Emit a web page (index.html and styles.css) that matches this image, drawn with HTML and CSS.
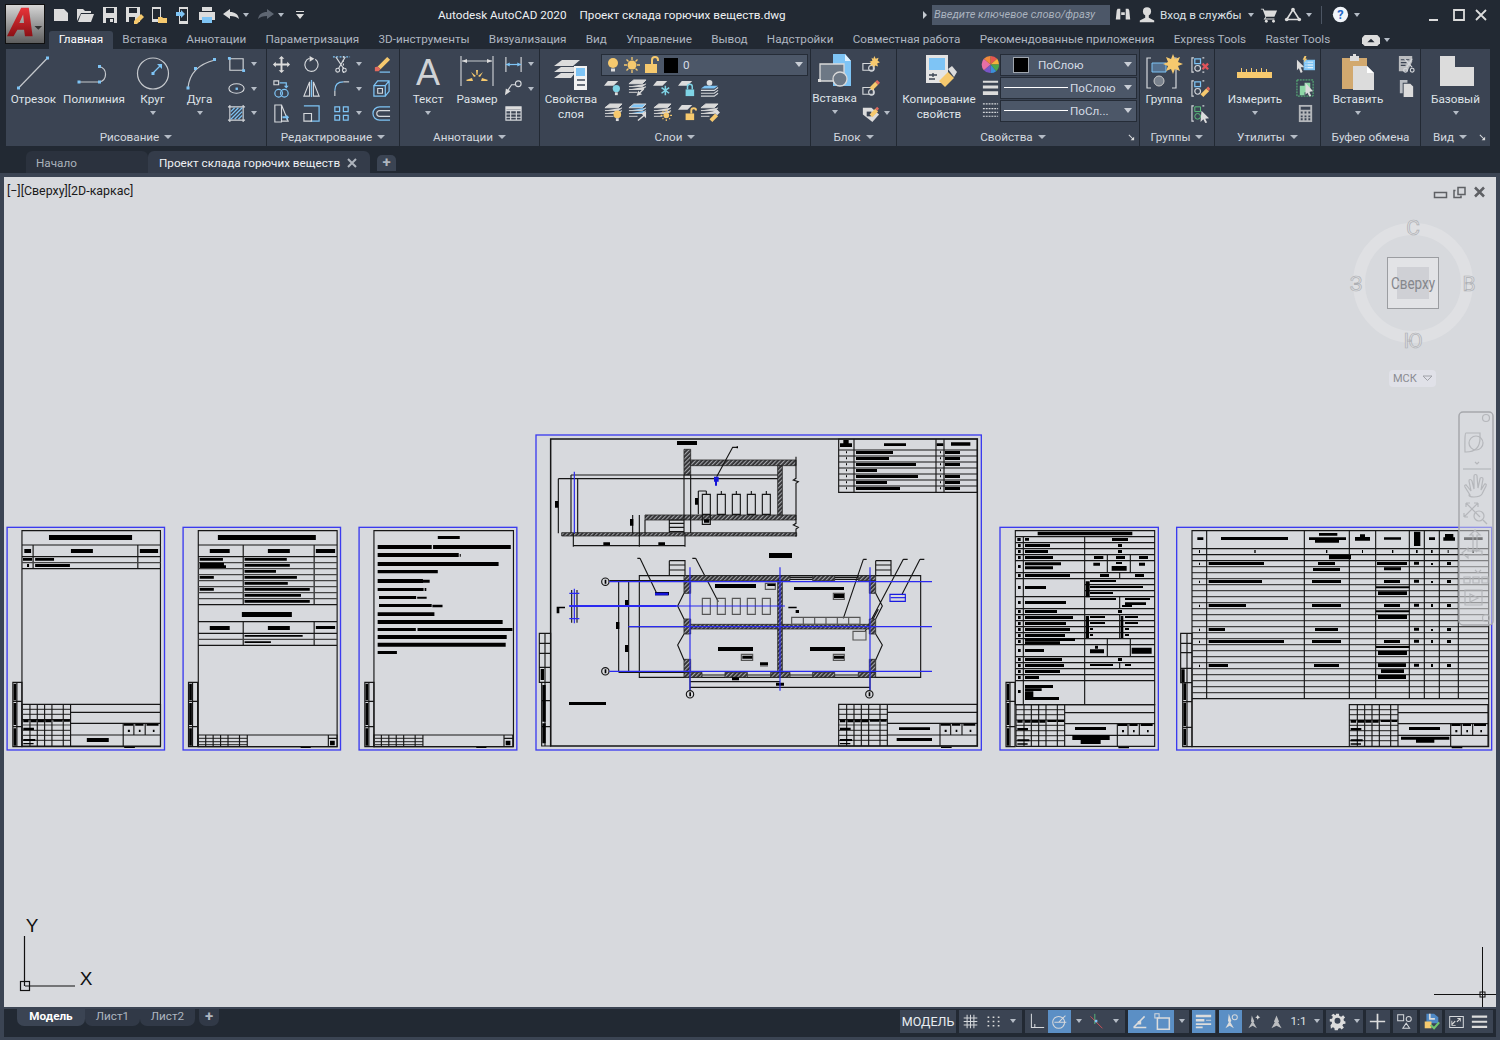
FILE: index.html
```html
<!DOCTYPE html>
<html lang="ru">
<head>
<meta charset="utf-8">
<title>Autodesk AutoCAD 2020</title>
<link rel="stylesheet" href="styles.css">
</head>
<body>
<div class="app">
  <div class="appbtn">
    <svg viewBox="0 0 40 40" width="38" height="38"><defs><linearGradient id="ar" x1="0" y1="0" x2="0" y2="1"><stop offset="0" stop-color="#e8343a"/><stop offset="1" stop-color="#8c1015"/></linearGradient></defs><path fill="url(#ar)" d="M1 33 16 3h8l4 30h-8l-1-7h-7l-4 7zM14 19h5l-1-9z"/><path fill="#333" d="M30 22h8l-4 4z"/></svg>
  </div>
  <header class="titlebar">
    <div class="qat">
      <span class="q"><svg viewBox="0 0 20 20"><path class="fw" d="M3 4h10l4 4v8H3z"/></svg></span>
      <span class="q"><svg viewBox="0 0 20 20"><path class="fw" d="M2 16V4h6l2 2h6v2H6z"/><path class="fw" d="M3 17l3-8h13l-3 8z"/></svg></span>
      <span class="q"><svg viewBox="0 0 20 20"><path class="fw" d="M3 2h14v16H3z"/><path fill="#222933" d="M6 3h8v5H6zM6 13h8v5H6z"/><path class="fw" d="M10 14h3v3h-3z"/></svg></span>
      <span class="q"><svg viewBox="0 0 20 20"><path class="fw" d="M2 2h14v15H2z"/><path fill="#222933" d="M5 3h8v5H5zM5 12h6v5H5z"/><path class="fy" d="M10 16l7-7 3 3-7 7h-3z"/></svg></span>
      <span class="q"><svg viewBox="0 0 20 20"><path class="fw" d="M4 2h9v15H4z"/><path fill="#222933" d="M5 4h7v10H5z"/><path class="fy" d="M10 12h4l1 1h4v5h-9z"/></svg></span>
      <span class="q"><svg viewBox="0 0 20 20"><path class="fw" d="M6 2h9v17H6z"/><path fill="#222933" d="M7 4h7v12H7z"/><path class="fb" d="M3 7h5V5l4 4-4 4v-2H3z"/></svg></span>
      <span class="q"><svg viewBox="0 0 20 20"><path class="fw" d="M5 2h10v4H5zM2 7h16v8h-3v-3H5v3H2z"/><path class="fb" d="M5 12h10v6H5z"/></svg></span>
      <span class="q"><svg viewBox="0 0 20 20"><path class="fw" d="M2 9l7-5v3c5 0 8 2 9 7-2-2-5-3-9-3v3z"/></svg></span><i class="car cq"></i>
      <span class="q ml4"><svg viewBox="0 0 20 20"><path fill="#5e6672" d="M18 9l-7-5v3C6 7 3 9 2 14c2-2 5-3 9-3v3z"/></svg></span><i class="car cq"></i>
      <span class="more"><svg viewBox="0 0 10 10" width="10" height="10"><path class="fw" d="M1 1h8v1H1zM1 4h8L5 9z"/></svg></span>
    </div>
    <div class="doctitle"><span>Autodesk AutoCAD 2020</span><span>Проект склада горючих веществ.dwg</span></div>
    <i class="arrow"></i>
    <div class="search">Введите ключевое слово/фразу</div>
    <span class="c26"><svg viewBox="0 0 20 20" width="18" height="18"><path class="fw" d="M3 5l1-2h3v12H2zM13 3h3l1 2 1 10h-5zM8 7h4v3H8z"/></svg></span>
    <span class="c22"><svg viewBox="0 0 20 20" width="18" height="18"><circle class="fw" cx="10" cy="6" r="4.5"/><path class="fw" d="M8 10h4v3l6 3v2H2v-2l6-3z"/></svg></span>
    <span class="svc">Вход в службы<i class="car"></i></span>
    <span class="c22 ml8"><svg viewBox="0 0 20 20" width="18" height="18"><path class="fw" d="M1 3h3l1 2h14l-3 7H7l-1 2h10v1H4l2-3L3 4H1z"/><circle class="fw" cx="7" cy="17" r="1.6"/><circle class="fw" cx="15" cy="17" r="1.6"/></svg></span>
    <span class="c22 ml2"><svg viewBox="0 0 20 20" width="18" height="18"><path class="sw2" d="M10 4l7 11H3z"/><circle class="fw" cx="10" cy="4" r="2"/><circle class="fw" cx="3" cy="15" r="2"/><circle class="fw" cx="17" cy="15" r="2"/></svg></span>
    <i class="car ml2"></i>
    <i class="divider"></i>
    <span class="c22 ml7"><svg viewBox="0 0 20 20" width="17" height="17"><circle fill="#f0f4fa" cx="10" cy="10" r="9"/><text x="10" y="15" class="qm">?</text></svg></span>
    <i class="car ml3"></i>
    <span class="c22 ml66"><svg viewBox="0 0 14 14" width="14" height="14"><path class="fw" d="M2 11h9v2H2z"/></svg></span>
    <span class="c22 ml3"><svg viewBox="0 0 14 14" width="14" height="14"><path class="sw2" d="M2 2h10v10H2z"/><path class="fw" d="M2 1h10v2H2z"/></svg></span>
    <span class="c22"><svg viewBox="0 0 14 14" width="14" height="14"><path class="sw2" d="M2 2l10 10M12 2 2 12"/></svg></span>
  </header>

  <nav class="tabs">
    <span class="t on">Главная</span><span class="t">Вставка</span><span class="t">Аннотации</span><span class="t">Параметризация</span><span class="t">3D-инструменты</span><span class="t">Визуализация</span><span class="t">Вид</span><span class="t">Управление</span><span class="t">Вывод</span><span class="t">Надстройки</span><span class="t">Совместная работа</span><span class="t">Рекомендованные приложения</span><span class="t">Express Tools</span><span class="t">Raster Tools</span>
    <span class="t tmini"><svg viewBox="0 0 20 12" width="18" height="11"><path class="fw" d="M3 0h14l3 3v6l-3 3H3L0 9V3z"/><path fill="#222933" d="M6 8l4-4 4 4z"/></svg><i class="car ml4"></i></span>
  </nav>

  <section class="ribbon">
    <div class="panel p1">
      <div class="pbody">
        <div class="big w55"><svg class="bi" viewBox="0 0 36 36"><path class="sg" d="M2.5 34 31.5 4"/><path class="fb" d="M1 32.500h3v3H1zM30 2.500h3v3h-3z"/></svg><span class="lb">Отрезок</span></div>
        <div class="big w66"><svg class="bi" viewBox="0 0 36 36"><path class="sg" d="M3 28H23.500A8 8 0 0 0 23.500 12.500"/><path class="fb" d="M1.500 26.500h3v3h-3zM22 26.500h3v3h-3zM22 11h3v3h-3z"/></svg><span class="lb">Полилиния</span></div>
        <div class="big w51"><svg class="bi" viewBox="0 0 36 36"><circle class="sg" cx="18" cy="19.500" r="15.500"/><path class="sb" d="M18 19 25 12"/><path class="fb" d="M16.500 18h3v3h-3zM22 10h5v5z"/></svg><span class="lb">Круг</span><i class="car cb"></i></div>
        <div class="big w43"><svg class="bi" viewBox="0 0 36 36"><path class="sg" d="M6 34Q8 12 33 6"/><path class="fb" d="M4.500 32.500h3v3h-3zM12 13h3v3h-3zM31 4h3v3h-3z"/></svg><span class="lb">Дуга</span><i class="car cb"></i></div>
        <div class="stack">
          <div class="cell"><span class="ic w30"><svg class="si" viewBox="0 0 20 20"><path class="sw" d="M3 4h14v12H3z"/><path class="fb" d="M1 2h3v3H1zM16 15h3v3h-3z"/></svg></span><i class="car"></i></div>
          <div class="cell"><span class="ic w30"><svg class="si" viewBox="0 0 20 20"><ellipse class="sw" cx="10" cy="10" rx="8" ry="5"/><path class="fb" d="M9 9h2.500v2.500H9z"/></svg></span><i class="car"></i></div>
          <div class="cell"><span class="ic w30"><svg class="si" viewBox="0 0 20 20"><path class="sw" d="M3 1v18M17 1v18M1 3h18M1 17h18"/><path class="sb" d="M4 8l4-4M4 12l8-8M4 16 16 4M8 16l8-8M12 16l4-4"/></svg></span><i class="car"></i></div>
        </div>
      </div>
      <div class="ptitle">Рисование<i class="car cl"></i></div>
    </div>

    <div class="panel p2">
      <div class="pbody">
        <div class="stack c4">
          <span class="ic"><svg class="si" viewBox="0 0 20 20"><path class="fw" d="M10 1l3 3h-2v5h5V7l3 3-3 3v-2h-5v5h2l-3 3-3-3h2v-5H4v2l-3-3 3-3v2h5V4H7z"/></svg></span>
          <span class="ic"><svg class="si" viewBox="0 0 20 20"><path class="sw" d="M14 4.500A7 7 0 1 1 8 3.500"/><path class="fw" d="M8 1l5 3-5 3z"/></svg></span>
          <div class="cell"><span class="ic w30"><svg class="si" viewBox="0 0 20 20"><path class="sb" stroke-dasharray="2 1.500" d="M1 2h18"/><path class="sw" d="M4 2l8 12M14 2 7 14"/><circle class="sw" cx="6" cy="16" r="2"/><circle class="sw" cx="13" cy="16" r="2"/><path class="sw" d="M12 1v18" stroke-dasharray="2 2"/></svg></span><i class="car"></i></div>
          <span class="ic"><svg class="si" viewBox="0 0 20 20"><path class="fy" d="M6 12 16 2l3 3-10 10z"/><path fill="#e36a5e" d="M3 13l3-1 3 3-2 2H3z"/><path class="sb" d="M8 18h11"/></svg></span>

          <span class="ic"><svg class="si" viewBox="0 0 20 20"><path class="sw" d="M2 2h5v4H2z"/><path class="sb" d="M8 4h7v4"/><path class="fb" d="M12.500 7h5L15 10z"/><circle class="sb" cx="7" cy="15" r="4"/><circle class="sb" cx="13" cy="15" r="4"/></svg></span>
          <span class="ic"><svg class="si" viewBox="0 0 20 20"><path class="sw" d="M8 3v15H2z"/><path class="sb" d="M10 1v18"/><path class="sw" d="M12 3v15h6z"/></svg></span>
          <div class="cell"><span class="ic w30"><svg class="si" viewBox="0 0 20 20"><path class="sw" d="M3 18v-6"/><path class="sb" d="M3 12Q3 3 12 3"/><path class="sw" d="M12 3h6"/></svg></span><i class="car"></i></div>
          <span class="ic"><svg class="si" viewBox="0 0 20 20"><path class="sb" d="M2 7h12v11H2zM2 7l4-5h12v11l-4 5M14 7l4-5"/><path class="sw" d="M6 10h5v5H6z"/></svg></span>

          <span class="ic"><svg class="si" viewBox="0 0 20 20"><path class="sw" d="M3 1h7v18H3zM10 1l7 17H10"/><path class="fb" d="M11 13h4v-2l3 3-3 3v-2h-4z"/></svg></span>
          <span class="ic"><svg class="si" viewBox="0 0 20 20"><path class="sb" d="M2 2h16v16H9"/><path class="sw" d="M2 10h8v8H2z"/></svg></span>
          <div class="cell"><span class="ic w30"><svg class="si" viewBox="0 0 20 20"><path class="sb" d="M3 3h5v5H3zM12 3h5v5h-5zM3 12h5v5H3zM12 12h5v5h-5z"/></svg></span><i class="car"></i></div>
          <span class="ic"><svg class="si" viewBox="0 0 20 20"><path class="sb" d="M19 3H8a7 7 0 0 0 0 14h11"/><path class="sw" d="M19 7H8a3 3 0 0 0 0 6h11"/></svg></span>
        </div>
      </div>
      <div class="ptitle">Редактирование<i class="car cl"></i></div>
    </div>

    <div class="panel p3">
      <div class="pbody">
        <div class="big w56"><span class="bigA">A</span><span class="lb">Текст</span><i class="car cb"></i></div>
        <div class="big w42"><svg class="bi" viewBox="0 0 36 36"><path class="sg" d="M2 2v30M34 2v30M3 7h30"/><path class="fw" d="M3 7l5-2v4zM33 7l-5-2v4z"/><path class="fy" d="M7 26l6-2 1 3h-6zM29 26l-6-2-1 3h6zM12 18l5 4-2 1zM24 18l-5 4 2 1zM17 16h2l-.500 5h-1z"/></svg><span class="lb">Размер</span></div>
        <div class="stack">
          <div class="cell"><span class="ic w30"><svg class="si" viewBox="0 0 20 20"><path class="sw" d="M2 2v16M18 2v16"/><path class="sb" d="M2 10h16"/><path class="fb" d="M2 10l4-2v4zM18 10l-4-2v4z"/></svg></span><i class="car"></i></div>
          <div class="cell"><span class="ic w30"><svg class="si" viewBox="0 0 20 20"><circle class="sw" cx="15" cy="5" r="3"/><path class="sw" d="M12 6H8l-4 6"/><path class="fw" d="M1 17l1-7 5 3z"/></svg></span><i class="car"></i></div>
          <div class="cell"><span class="ic w30"><svg class="si" viewBox="0 0 20 20"><path class="sw" d="M2 3h16v14H2zM2 7h16M2 10.500h16M2 14h16M7 7v10M13 7v10"/><path class="fw" d="M2 3h16v3H2z"/></svg></span></div>
        </div>
      </div>
      <div class="ptitle">Аннотации<i class="car cl"></i></div>
    </div>

    <div class="panel p4">
      <div class="pbody">
        <div class="big w62"><svg class="bi" viewBox="0 0 36 36"><path class="fw" d="M9 6h18l-7 6H1zM8 13h19l-7 5H1zM8 19h14l-4 5H1z"/><path fill="#f2f2f2" d="M21 12h13v24H21z"/><path class="fb" d="M23 14h9v8h-9z"/><path class="sk" d="M24 26h8M24 31h8"/></svg><span class="lb l2">Свойства<br>слоя</span></div>
        <div class="lcol">
          <div class="dd w207"><svg class="ddi" viewBox="0 0 75 20" width="75" height="20"><circle class="fy" cx="9" cy="8" r="5"/><path class="fw" d="M7 13.500h4v3h-4z"/><circle class="fy" cx="28" cy="10" r="4.500"/><path class="sy" d="M28 2v3M28 15v3M20 10h3M33 10h3M22.500 4.500l2 2M31.500 13.500l2 2M33.500 4.500l-2 2M24.500 13.500l-2 2"/><path class="fy" d="M41 9h12v9H41z"/><path class="sy2" d="M48 9V5a3 3 0 0 1 6 0v1"/><path fill="#000" d="M60 3h14v15H60z"/></svg><span class="ddt">0</span><i class="car cdd"></i></div>
          <div class="layers">
            <span class="ic"><svg class="si" viewBox="0 0 20 20"><path class="fw" d="M4 2h11l-5 5H0z"/><circle fill="#7fd4e6" cx="13" cy="10" r="3.800"/><path class="fw" d="M11.500 14h3v3h-3z"/></svg></span>
            <span class="ic"><svg class="si" viewBox="0 0 20 20"><use href="#stk"/><path class="fw" d="M17 11l-4 4 2 1-6 2 2-6 1 2 4-4z"/></svg></span>
            <span class="ic"><svg class="si" viewBox="0 0 20 20"><path class="fw" d="M4 2h11l-5 5H0z"/><path class="scy" d="M13 7v10M9 9l8 6M17 9l-8 6"/></svg></span>
            <span class="ic"><svg class="si" viewBox="0 0 20 20"><path class="fw" d="M4 2h11l-5 5H0z"/><path fill="#7fd4e6" d="M8 11h9v7H8z"/><path class="scy" d="M10 11V8a2.500 2.500 0 0 1 5 0v3"/></svg></span>
            <span class="ic"><svg class="si" viewBox="0 0 20 20"><circle class="fw" cx="10" cy="4" r="3"/><path class="fb" d="M5 7h14l-4 3H1z"/><path class="sw" d="M1 12h14l4-3M1 15h14l4-3M1 18h14l4-3"/></svg></span>
            <span class="ic"><svg class="si" viewBox="0 0 20 20"><use href="#stk"/><circle class="fy" cx="14" cy="12" r="4"/><path class="fw" d="M12.500 16h3v3h-3z"/></svg></span>
            <span class="ic"><svg class="si" viewBox="0 0 20 20"><use href="#stkb"/><path class="fw" d="M19 9v7l-2-2-6 5-1-1 6-5-2-2z"/></svg></span>
            <span class="ic"><svg class="si" viewBox="0 0 20 20"><use href="#stk"/><circle class="fy" cx="14" cy="13" r="3"/><path class="sy" d="M14 7v2M14 17v2M8 13h2M18 13h2M10 9l1 1M17 16l1 1M18 9l-1 1M11 16l-1 1"/></svg></span>
            <span class="ic"><svg class="si" viewBox="0 0 20 20"><path class="fw" d="M4 2h11l-5 5H0z"/><path class="fy" d="M8 11h9v7H8z"/><path class="sy2" d="M14 11V8a2.500 2.500 0 0 1 5 0"/></svg></span>
            <span class="ic"><svg class="si" viewBox="0 0 20 20"><use href="#stk"/><path class="fy" d="M10 17l6-6 3 3-6 6z"/><path class="fw" d="M14 9l3-3 4 4-3 3z"/></svg></span>
          </div>
        </div>
      </div>
      <div class="ptitle">Слои<i class="car cl"></i></div>
    </div>

    <div class="panel p5">
      <div class="pbody">
        <div class="big w47"><svg class="bi" viewBox="0 0 36 36"><path class="fb" d="M16 0h12l6 7v25H16z"/><path fill="#dff0fc" d="M28 0l6 7h-6z"/><path fill="#6d7885" stroke="#d9d9d9" stroke-width="1.300" d="M3 10h24v17H3z"/><circle fill="#6d7885" stroke="#d9d9d9" stroke-width="1.300" cx="23" cy="25" r="7"/><path class="fw" d="M1 25h3v3H1z"/></svg><span class="lb lbup">Вставка</span><i class="car cbu"></i></div>
        <div class="stack">
          <div class="cell"><span class="ic w24"><svg class="si" viewBox="0 0 20 20"><path class="sw" d="M2 9h11v7H2z"/><circle class="sw" cx="11" cy="14" r="3"/><path class="fy" d="M14 1l1.500 3 3-1-1 3 2.500 1.500-3 1.500 1 3-3-1-1.500 2.500-1-3-3 1 1-3L9 7l3-1-1-3 2 1z"/></svg></span></div>
          <div class="cell"><span class="ic w24"><svg class="si" viewBox="0 0 20 20"><path class="sw" d="M2 9h11v7H2z"/><circle class="sw" cx="11" cy="14" r="3"/><path class="fy" d="M9 9l6-6 3 3-6 6z"/><path fill="#e36a5e" d="M15 3l2-2 3 3-2 2z"/></svg></span></div>
          <div class="cell"><span class="ic w24"><svg class="si" viewBox="0 0 20 20"><path class="fw" d="M2 4h9l8 7-7 8-10-8z"/><path fill="#3b4453" d="M6 8h5v5H6z"/><path class="fy" d="M9 11l6-6 3 3-6 6z"/><path fill="#e36a5e" d="M15 5l2-2 2 2-2 2z"/></svg></span><i class="car ml2"></i></div>
        </div>
      </div>
      <div class="ptitle">Блок<i class="car cl"></i></div>
    </div>

    <div class="panel p6">
      <div class="pbody">
        <div class="big w84"><svg class="bi" viewBox="0 0 36 36"><path fill="#e4e4e4" d="M5 1h22v28H5z"/><path class="fb" d="M8 4h16v12H8z"/><path class="sk" d="M8 21h8M8 25h6M12 19v4"/><path class="fy" d="M18 27l9-9 6 6-9 9z"/><path class="fw" d="M27 15l4-3 5 6-3 5z"/></svg><span class="lb l2">Копирование<br>свойств</span></div>
        <div class="pstack">
          <div class="prow"><span class="ic w19"><svg class="si" viewBox="0 0 20 20"><path fill="#e6574f" d="M10 10V1a9 9 0 0 1 7 3z"/><path fill="#f5b13d" d="M10 10 17 4a9 9 0 0 1 2 6z"/><path fill="#4ca64c" d="M10 10h9a9 9 0 0 1-3 7z"/><path fill="#3c8fd8" d="M10 10l6 7a9 9 0 0 1-6 2z"/><path fill="#7a55c7" d="M10 10v9a9 9 0 0 1-7-3z"/><path fill="#e86fa5" d="M10 10l-7 6a9 9 0 0 1 0-12z"/><path fill="#f08a3c" d="M10 10 3 4a9 9 0 0 1 7-3z"/></svg></span><div class="dd w137"><i class="swatch"></i><span class="ddt l10">ПоСлою</span><i class="car cdd"></i></div></div>
          <div class="prow"><span class="ic w19"><svg class="si" viewBox="0 0 20 20"><path class="fw" d="M2 3h16v2H2zM2 8h16v3H2zM2 14h16v4H2z"/></svg></span><div class="dd w137"><i class="lineprev"></i><span class="ddt m2">ПоСлою</span><i class="car cdd"></i></div></div>
          <div class="prow"><span class="ic w19"><svg class="si" viewBox="0 0 20 20"><path class="sw" d="M2 3h16M2 8h16M2 12h16M2 16h16" stroke-dasharray="2 1"/></svg></span><div class="dd w137"><i class="lineprev"></i><span class="ddt m2">ПоСл...</span><i class="car cdd"></i></div></div>
        </div>
      </div>
      <div class="ptitle pt6">Свойства<i class="car cl"></i><svg class="launch" viewBox="0 0 8 8" width="7" height="7"><path class="sw" d="M1 1l5 5"/><path class="fw" d="M7 7H3l4-4z"/></svg></div>
    </div>

    <div class="panel p7">
      <div class="pbody">
        <div class="big w48"><svg class="bi" viewBox="0 0 36 36"><path class="sw" d="M5 4H1v30h4M26 4h4v30h-4"/><path fill="#55718f" stroke="#7ec4f5" d="M6 9h14v9H6z"/><circle fill="#7a828d" stroke="#c9c9c9" cx="13" cy="27" r="5"/><path class="fy" d="M27 0l2 5 5-2-2 5 5 2-5 2 2 5-5-2-2 5-2-5-5 2 2-5-5-2 5-2-2-5 5 2z"/></svg><span class="lb">Группа</span></div>
        <div class="stack">
          <div class="cell"><span class="ic w24"><svg class="si" viewBox="0 0 20 20"><path class="sw" d="M3 3H1v15h2M12 3h2M12 18h2"/><path class="sb" d="M4 4h6v5H4z"/><circle class="sw" cx="7" cy="14" r="3"/><path stroke="#e0535a" stroke-width="2.500" d="M12 9l6 6M18 9l-6 6"/></svg></span></div>
          <div class="cell"><span class="ic w24"><svg class="si" viewBox="0 0 20 20"><path class="sw" d="M3 2H1v16h2M12 2h2"/><path class="sb" d="M4 3h6v5H4z"/><circle class="sw" cx="7" cy="13" r="3"/><path class="fy" d="M10 16l6-6 3 3-6 6z"/><path fill="#e36a5e" d="M16 10l2-2 2 2-1 3z"/></svg></span></div>
          <div class="cell"><span class="ic w24"><svg class="si" viewBox="0 0 20 20"><path class="sw" d="M3 2H1v16h2M12 2h2"/><path stroke="#5cc47e" fill="none" d="M4 3h6v5H4z"/><circle fill="none" stroke="#5cc47e" cx="7" cy="13" r="3"/><path class="fw" d="M11 7l8 8-4 .5 2 4-2 .5-2-4-3 3z"/></svg></span></div>
        </div>
      </div>
      <div class="ptitle">Группы<i class="car cl"></i></div>
    </div>

    <div class="panel p8">
      <div class="pbody">
        <div class="big w80"><svg class="bi" viewBox="0 0 36 36"><path class="fy" d="M0 18h4v-4h1v4h4v-3h1v3h4v-4h1v4h4v-3h1v3h4v-4h1v4h4v-3h1v3h5v6H0z"/></svg><span class="lb">Измерить</span><i class="car cb"></i></div>
        <div class="stack">
          <div class="cell"><span class="ic w20"><svg class="si" viewBox="0 0 20 20"><path class="fw" d="M1 5l8 8H5l2 5-2 1-2-5-2 2z"/><path class="fb" d="M8 5h12v11H8z"/><path fill="#fff" d="M10 7h1v1h-1zM12 7h6v1h-6zM10 10h1v1h-1zM12 10h6v1h-6zM10 13h1v1h-1zM12 13h6v1h-6z"/><path class="fy" d="M9 1 7 5h2l-1 3 4-4h-2l1-3z"/></svg></span></div>
          <div class="cell"><span class="ic w20"><svg class="si" viewBox="0 0 20 20"><path fill="none" stroke="#5cc47e" stroke-dasharray="2 1" d="M1 1h17v17H1z"/><path fill="#8ed8a6" d="M4 7h5V4h6v10H9v3H4z"/><path class="fw" d="M10 4l8 9-4 .5 2 4-2 1-2-4-2 2z"/></svg></span></div>
          <div class="cell"><span class="ic w20"><svg class="si" viewBox="0 0 20 20"><path class="fw" d="M3 1h14v18H3z" fill-opacity=".75"/><path fill="#3b4453" d="M5 3h10v3H5zM5 8h2v2H5zM9 8h2v2H9zM13 8h2v2h-2zM5 12h2v2H5zM9 12h2v2H9zM13 12h2v2h-2zM5 15h2v2H5zM9 15h2v2H9zM13 15h2v2h-2z"/></svg></span></div>
        </div>
      </div>
      <div class="ptitle">Утилиты<i class="car cl"></i></div>
    </div>

    <div class="panel p9">
      <div class="pbody">
        <div class="big w74"><svg class="bi" viewBox="0 0 36 36"><path fill="#d2a96f" d="M2 4h25v31H2z"/><path class="fw" d="M10 2h9v5h-9zM13 0h3v3h-3z"/><path fill="#dcdcdc" d="M13 12h14l7 7v17H13z"/><path fill="#fff" d="M27 12l7 7h-7z"/></svg><span class="lb">Вставить</span><i class="car cb"></i></div>
        <div class="stack">
          <div class="cell"><span class="ic w22"><svg class="si" viewBox="0 0 20 20"><path class="fw" d="M2 1h14v6l-5 10H2z" fill-opacity=".8"/><path class="sk" d="M4 5h9M4 8h6M4 11h5"/><path class="sw" d="M8 4l8 9M16 4l-6 9"/><circle class="sw" cx="9" cy="16" r="2"/><circle class="sw" cx="16" cy="16" r="2"/></svg></span></div>
          <div class="cell"><span class="ic w22"><svg class="si" viewBox="0 0 20 20"><path fill="#b8bcc2" d="M3 1h8v3H6v11H3z"/><path class="fw" d="M7 5h7l3 3v11H7z"/></svg></span></div>
        </div>
      </div>
      <div class="ptitle">Буфер обмена</div>
    </div>

    <div class="panel p10">
      <div class="pbody">
        <div class="big w69"><svg class="bi" viewBox="0 0 36 36"><path fill="#dcdcdc" d="M2 2h15v11h19v19H2z"/></svg><span class="lb">Базовый</span><i class="car cb"></i></div>
      </div>
      <div class="ptitle pt10">Вид<i class="car cl"></i><svg class="launch" viewBox="0 0 8 8" width="7" height="7"><path class="sw" d="M1 1l5 5"/><path class="fw" d="M7 7H3l4-4z"/></svg></div>
    </div>
  </section>

  <div class="doctabs">
    <span class="dt dt1">Начало</span>
    <span class="dt dt2">Проект склада горючих веществ<svg viewBox="0 0 10 10" width="10" height="10"><path class="sx" d="M1 1l8 8M9 1 1 9"/></svg></span>
    <span class="dtplus">+</span>
  </div>

  <main class="viewport">
    <svg class="canvas" viewBox="4 177 1492 830" width="1492" height="830">
      <defs>
        <path id="stk" d="M6 1h13l-4 4H1zM1 8h14l4-3M1 11h14l4-3M1 14h9" fill="#d9d9d9" stroke="#d9d9d9"/>
        <path id="stkb" d="M6 1h13l-4 4H1zM1 8h14l4-3M1 11h14l4-3M1 14h9" fill="#7ec4f5" stroke="#d9d9d9"/>
        <pattern id="hatch" width="9" height="9" patternUnits="userSpaceOnUse" patternTransform="rotate(45)">
          <rect width="9" height="9" fill="#2e2e30"/><rect width="3.500" height="9" fill="#a4a6aa"/>
        </pattern>
        <g id="tb">
          <path class="gl" d="M0 15H146M0 30H146M0 62H146M0 78H146M0 93H146M0 108H146"/>
          <path class="ln" d="M0 0H416V125H0ZM24 0V125M46 0V125M68 0V125M90 0V125M124 0V125M146 0V125M146 24H416M146 57H416M146 92H304M304 57V125M304 92H416M336 57V92M370 57V92M0 46H146"/>
          <path class="bk" d="M4 46h16v8H4zM26 46h18v8H26zM48 46h18v8H48zM70 46h18v8H70zM94 46h28v6H94zM126 46h18v6h-18zM4 70h32v7H4zM4 104h36v6H4zM4 116h31v4H4zM306 58h28v6h-28zM340 58h25v6h-25zM374 58h36v6h-36zM318 76h6v7h-6zM351 76h5v7h-5zM393 76h5v7h-5zM307 127h32v4h-32z"/>
        </g>
        <g id="bb">
          <path class="gl" d="M0 10H145M0 20H145M0 29H145"/>
          <path class="ln" d="M0 0H411V35H0ZM22 0V35M44 0V35M66 0V35M88 0V35M122 0V35M145 0V35M385 0V35M385 10H411"/>
          <path class="bk" d="M390 17h14v14h-14zM303 36h30v3h-30z"/>
        </g>
        <g id="st">
          <path class="ln" d="M0 0H27V193H0ZM0 57H27M0 133H27M12 0V193"/>
          <path class="bk" d="M2 4h8v50H2zM2 62h8v66H2zM2 138h8v52H2z"/>
        </g>
      </defs>

      <g transform="translate(0 520) scale(.3378 .3333)">
        <rect class="bl" x="21" y="22" width="466" height="668"/>
        <use href="#st" x="38" y="487"/>
        <path class="ln" d="M65 32H475V680H65ZM65 75H475M65 110H475M65 146H475M98 75V146M408 75V146"/>
        <path class="gl" d="M65 128H475"/>
        <path class="bk" d="M145 45h246v15H145zM72 87h20v12H72zM210 87h65v12h-65zM414 87h54v12h-54zM104 114h56v8h-56zM68 114h27v8H68zM104 132h103v9H104zM80 132h6v9h-6z"/>
        <g transform="translate(65 553) scale(.986 1)"><use href="#tb"/></g>
        <path class="bk" d="M257 654h65v12h-65z"/>
      </g>

      <g transform="translate(0 520) scale(.3378 .3333)">
        <rect class="bl" x="542" y="22" width="466" height="668"/>
        <use href="#st" x="558" y="487"/>
        <path class="ln" d="M587 32H998V680H587ZM587 75H998M587 110H998M587 254H998M587 305H998M587 340H998M587 376H998M720 75V254M930 75V254M720 305V376M930 305V376"/>
        <path class="gl" d="M587 128H998M587 146H998M587 164H998M587 182H998M587 200H998M587 218H998M587 236H998M587 358H998"/>
        <path class="bk" d="M645 45h290v15H645zM621 87h59v12h-59zM793 87h65v12h-65zM935 87h57v12h-57zM724 114h125v8H724zM724 132h134v8H724zM724 150h93v8h-93zM724 168h155v8H724zM724 186h128v8H724zM724 204h193v8H724zM724 222h167v8H724zM724 240h193v8H724zM591 114h69v8h-69zM591 128h72v8h-72zM591 136h78v8h-78zM591 168h42v8h-42zM591 204h42v8h-42zM716 276h148v15H716zM621 318h59v12h-59zM793 318h65v12h-65zM935 318h57v9h-57zM724 345h172v5H724zM724 364h78v5h-78z"/>
        <use href="#bb" x="587" y="645"/>
      </g>

      <g transform="translate(0 520) scale(.3378 .3333)">
        <rect class="bl" x="1063" y="22" width="467" height="668"/>
        <use href="#st" x="1080" y="487"/>
        <path class="ln" d="M1107 32H1520V680H1107Z"/>
        <path class="bk" d="M1296 48h65v9h-65zM1118 75h160v12h-160zM1282 75h230v12h-230zM1118 99h240v12h-240zM1361 102h3v8h-3zM1118 126h358v12h-358zM1118 150h178v10h-178zM1118 177h134v12h-134zM1252 179h20v9h-20zM1118 204h136v9h-136zM1257 204h5v9h-5zM1122 228h110v9h-110zM1235 230h28v6h-28zM1122 252h156v9h-156zM1280 254h30v8h-30zM1118 277h168v11h-168zM1118 300h370v12h-370zM1118 324h113v9h-113zM1236 324h281v9h-281zM1118 345h382v12h-382zM1118 368h379v12h-379zM1118 393h57v9h-57z"/>
        <use href="#bb" x="1107" y="645"/>
      </g>

      <g transform="translate(530 430) scale(.33333)">
        <rect class="bl" x="18" y="15" width="1336" height="945"/>
        <path class="ln l4" d="M62 27H1342V948H62Z"/>
        <path class="ln" d="M28 610H62V757H28ZM35 757H62V948H35ZM45 610V757M45 757V948M28 640H62M28 670H62M28 712H62M35 812H62M35 890H62"/>
        <path class="bk" d="M32 717h10v33H32zM37 765h10v110H37zM37 880h10v60H37z"/>
        <path class="ln" d="M926 27H1342V187H926ZM972 27V187M1218 27V187M1242 27V187M926 60H1342M926 78H1342M926 96H1342M926 114H1342M926 132H1342M926 150H1342M926 168H1342"/>
        <path class="bk" d="M930 40h36v11h-36zM940 30h16v10h-16zM1062 40h66v8h-66zM1220 40h20v8h-20zM1263 37h58v10h-58zM978 63h111v9H978zM978 81h99v9h-99zM978 99h180v9H978zM978 117h63v9h-63zM978 135h186v9H978zM978 153h93v9h-93zM978 171h132v9H978zM1245 63h45v9h-45zM1245 81h45v9h-45zM1245 99h45v9h-45zM1245 135h45v9h-45zM1245 153h45v9h-45zM1245 171h45v9h-45zM948 64h3v6h-3zM948 82h3v6h-3zM948 100h3v6h-3zM948 118h3v6h-3zM948 136h3v6h-3zM948 154h3v6h-3zM948 172h3v6h-3zM1230 64h3v6h-3zM1230 82h3v6h-3zM1230 100h3v6h-3zM1230 118h3v6h-3zM1230 136h3v6h-3zM1230 154h3v6h-3zM1230 172h3v6h-3zM441 33h60v12h-60z"/>
        <use href="#tb" x="926" y="823"/>
        <path class="bk" d="M1107 892h93v8h-93zM1100 924h106v9h-106z"/>

        <path class="ht" d="M482 90H798V107H482ZM462 58H482V135H462ZM743 107H757V255H743ZM345 255H798V270H345ZM95 308H800V318H95Z"/>
        <path class="ln" d="M85 146V310M85 146H743M123 135H743M123 135V310M143 146V310M462 135V310M482 135V310M308 255V310M328 255V350M345 270V310M418 270H462M418 280H462M418 292H462M418 305H462M418 270V308M130 310V350M465 310V350M130 347H465M798 80V145L790 150 805 155 798 160V280L790 285 805 292 798 297V320"/>
        <path class="ln" d="M517 193H541V253H517ZM562 193H586V253H562ZM607 193H631V253H607ZM652 193H676V253H652ZM697 193H721V253H697ZM529 183V193M574 183V193M619 183V193M664 183V193M709 183V193M505 183H529M505 183V253M517 253V283H541V253M622 52H608L560 140"/>
        <path class="bk" d="M75 213h10v20H75zM495 204h9v20h-9zM300 267h10v20h-10zM220 337h20v8h-20zM385 337h20v8h-20zM522 268h16v10h-16zM620 49h4v6h-4z"/>
        <path class="blb" d="M552 140h14v15h-14zM555 155h6v12h-6z"/>
        <path class="blt" d="M133 125V310"/>

        <path class="bk" d="M717 369h69v15h-69z"/>
        <path class="ln" d="M328 437H1172V742H328ZM418 392H465V437M418 392V437M418 405H465M418 420H465M1037 392H1083V437M1037 392V437M1037 405H1083M1037 420H1083M238 452H482M266 452V727M296 452V727M266 727H462M296 590H462M780 442H848M780 448H848M914 442H985M914 448H985M516 735H585M652 735H722M780 735H848M914 735H985M462 490 443 528 462 567M462 612 443 645 462 690M1037 490 1057 528 1037 567M1037 612 1057 645 1037 690M480 755H750M480 772H1020M480 742V780M1020 742V780M330 385H322M330 385 380 490M497 385H487M497 385 565 515M1000 388H1010M1000 388 940 565M1120 388H1133M1120 388 1005 605M1170 388H1183M1170 388 1115 495M1045 538 1025 575"/>
        <path class="ht" d="M462 437H780V452H462ZM848 437H914V452H848ZM985 437H1037V452H985ZM462 727H516V742H462ZM585 727H652V742H585ZM722 727H780V742H722ZM848 727H914V742H848ZM985 727H1037V742H985ZM462 452H482V490H462ZM462 567H482V612H462ZM462 688H482V727H462ZM1018 452H1037V490H1018ZM1018 567H1037V612H1018ZM1018 688H1037V727H1018ZM743 452H757V727H743ZM482 583H1018V597H482Z"/>
        <path class="ln gy" d="M517 505H541V553H517ZM562 505H586V553H562ZM607 505H631V553H607ZM652 505H676V553H652ZM697 505H721V553H697ZM785 562H990V583H785ZM820 562V583M854 562V583M888 562V583M922 562V583M956 562V583M969 604H1008V630H969ZM706 460H736V478H706ZM910 490H943V508H910ZM634 673H668V691H634ZM910 673H943V691H910ZM690 708H714"/>
        <circle class="ln wf" cx="226" cy="455" r="11"/><circle class="ln wf" cx="226" cy="724" r="11"/><circle class="ln wf" cx="480" cy="793" r="11"/><circle class="ln wf" cx="1018" cy="793" r="11"/>
        <path class="bk" d="M224 449h5v12h-5zM224 718h5v12h-5zM478 787h5v12h-5zM1016 787h5v12h-5zM555 462h123v12H555zM792 471h150v9H792zM564 651h105v12H564zM840 651h105v12H840zM712 462h24v6h-24zM912 492h30v12h-30zM637 677h30v9h-30zM912 677h30v9h-30zM690 697h24v9h-24zM285 510h10v18h-10zM258 576h10v21h-10zM285 645h10v21h-10zM606 742h21v9h-21zM738 758h24v9h-24zM117 816h111v9H117zM80 530h25v5H80zM80 535h8v15h-8zM775 530h25v5h-25zM797 540h10v9h-10zM375 486h42v10h-42z"/>
        <path class="ln" d="M125 480V578M141 480V578"/>
        <path class="blt" d="M238 455H1206M118 528H765M295 590H1206M238 724H1206M480 412V780M750 412V782M1020 412V780M133 476V580M1082 503H1128M118 490H148M118 566H148"/>
        <path class="blt wide" d="M118 528H440"/>
        <path class="ln blc" d="M1080 493H1126V514H1080Z"/>
        <path class="blb" d="M375 488h40v8h-40z"/>
      </g>

      <g transform="translate(990 520) scale(.33333)">
        <rect class="bl" x="30" y="22" width="475" height="668"/>
        <use href="#st" x="48" y="487"/>
        <path class="ln" d="M76 32H494V554H76ZM76 50H494M76 68H494M76 86H494M76 104H494M76 122H494M76 158H494M76 176H494M76 230H494M76 266H494M76 284H494M76 302H494M76 320H494M76 338H494M76 356H494M76 374H494M76 410H494M76 428H494M76 446H494M76 464H494M76 482H494M100 50V554M284 50V554M352 104V158M421 104V158M389 158V176M389 230V266M389 284V356M352 356V410M421 356V410M389 428V446M284 194H494M284 212H494"/>
        <path class="bk" d="M143 35h284v11H143zM105 54h12v8h-12zM105 72h75v9h-75zM105 90h69v9h-69zM105 108h84v9h-84zM105 127h108v9H105zM105 139h84v9h-84zM105 162h135v9H105zM105 198h63v9h-63zM105 243h123v9H105zM105 270h96v9h-96zM105 288h144v9H105zM105 306h123v9H105zM105 324h135v9H105zM105 342h120v9H105zM105 354h150v9H105zM105 364h105v9H105zM105 387h57v9h-57zM105 414h111v9H105zM105 432h117v9H105zM105 450h105v9H105zM105 468h42v9h-42zM105 495h84v9h-84zM105 505h50v8h-50zM105 514h25v8h-25zM105 522h25v9h-25zM105 531h102v9H105zM82 54h10v9H82zM84 72h8v9h-8zM84 90h8v9h-8zM84 108h8v9h-8zM84 135h8v9h-8zM84 162h8v9h-8zM84 198h8v9h-8zM84 243h8v9h-8zM84 270h8v9h-8zM84 288h8v9h-8zM84 306h8v9h-8zM84 324h8v9h-8zM84 342h8v9h-8zM84 360h8v9h-8zM84 387h8v9h-8zM84 414h8v9h-8zM84 432h8v9h-8zM84 450h8v9h-8zM84 468h8v9h-8zM84 510h8v9h-8zM366 54h48v9h-48zM384 72h12v9h-12zM384 90h12v9h-12zM312 108h28v9h-28zM378 108h27v9h-27zM447 108h27v9h-27zM310 128h20v9h-20zM378 126h18v6h-18zM365 138h45v14h-45zM447 128h18v9h-18zM330 162h27v9h-27zM435 162h27v9h-27zM300 180h78v6H300zM300 198h159v6H300zM300 216h69v6h-69zM300 234h78v6H300zM405 234h75v6h-75zM405 247h63v8h-63zM396 255h30v6h-30zM384 270h12v9h-12zM300 288h45v6h-45zM405 288h39v6h-39zM300 306h45v6h-45zM405 306h39v6h-39zM300 324h9v6h-9zM405 324h12v6h-12zM300 342h9v6h-9zM405 342h12v6h-12zM315 377h9v9h-9zM300 388h42v12h-42zM425 383h60v18h-60zM384 414h12v9h-12zM300 432h69v6h-69zM405 432h18v6h-18zM287 184h12v48h-12zM287 288h10v66h-10zM392 288h8v66h-8z"/>
        <use href="#tb" x="78" y="554"/>
        <path class="bk" d="M255 621h93v9h-93zM247 645h112v15H247zM272 660h60v12h-60z"/>
      </g>

      <g transform="translate(990 520) scale(.33333)">
        <rect class="bl" x="560" y="22" width="945" height="668"/>
        <path class="ln" d="M572 340H606V488H572ZM578 488H606V680H578ZM591 340V680M572 370H606M572 398H606M572 445H606M578 545H606M578 622H606"/>
        <path class="bk" d="M574 448h10v38h-10zM580 490h8v50h-8zM580 548h8v70h-8zM580 626h8v50h-8z"/>
        <path class="gl" d="M606 140H1496M606 158H1496M606 176H1496M606 194H1496M606 212H1496M606 230H1496M606 248H1496M606 266H1496M606 284H1496M606 302H1496M606 320H1496M606 338H1496M606 356H1496M606 374H1496M606 392H1496M606 410H1496M606 428H1496M606 446H1496M606 464H1496M606 482H1496M606 500H1496M606 518H1496"/>
        <path class="ln" d="M606 32H1496V680H606ZM606 86H1496M606 104H1496M606 122H1496M606 536H1496M650 32V536M943 32V536M1078 32V536M1157 32V536M1258 32V536M1303 32V536M1348 32V536M1405 32V536"/>
        <path class="bk" d="M622 52h18v8h-18zM693 51h201v9H693zM987 39h55v8h-55zM957 52h111v8H957zM975 60h72v8h-72zM1095 51h45v11h-45zM1110 43h15v8h-15zM1182 52h51v7h-51zM1272 35h19v43h-19zM1317 52h18v8h-18zM1360 52h35v10h-35zM1365 42h25v10h-25zM1422 52h56v8h-56zM1017 105h66v13h-66zM627 90h3v9h-3zM793 90h4v9h-4zM1008 90h4v9h-4zM1116 90h3v9h-3zM1206 90h4v9h-4zM1278 90h5v9h-5zM1323 90h5v9h-5zM1373 90h3v9h-3zM1447 90h5v9h-5z"/>
        <path class="bk" d="M656 126h166v9H656zM984 126h51v9h-51zM1161 126h90v9h-90zM1272 125h15v9h-15zM1323 129h6v6h-6zM1371 126h12v9h-12zM969 144h81v9h-81zM1182 142h51v9h-51zM656 180h160v9H656zM966 180h87v9h-87zM1182 180h48v9h-48zM1272 179h15v9h-15zM1323 183h6v6h-6zM1371 180h12v9h-12zM1158 199h100v6H1158zM1164 214h87v11h-87zM656 252h112v9H656zM966 252h87v9h-87zM1182 252h48v9h-48zM1272 251h15v9h-15zM1323 252h6v9h-6zM1371 252h12v9h-12zM1158 271h100v6H1158zM1164 285h87v12h-87zM656 324h49v9h-49zM975 324h69v9h-69zM1272 323h15v9h-15zM1323 327h6v6h-6zM1371 324h12v9h-12zM656 360h226v9H656zM966 360h87v9h-87zM1182 360h48v9h-48zM1272 359h15v9h-15zM1323 360h6v9h-6zM1371 360h12v9h-12zM1158 378h100v6H1158zM1164 393h87v12h-87zM656 432h58v9h-58zM972 432h75v9h-75zM1164 430h84v11h-84zM1272 431h15v9h-15zM1323 432h6v9h-6zM1371 432h12v9h-12zM1173 448h69v11h-69zM1164 465h84v12h-84zM627 128h3v7h-3zM627 182h3v7h-3zM627 254h3v7h-3zM627 326h3v7h-3zM627 362h3v7h-3zM627 434h3v7h-3z"/>
        <use href="#tb" x="1078" y="554"/>
        <path class="bk" d="M1257 621h93v9h-93zM1233 650h145v9H1233zM1278 659h55v9h-55z"/>
      </g>

      <g class="wc">
        <rect x="1434.500" y="192.500" width="12" height="5" />
        <path d="M1455.500 190.500h-1.500v7h7v-2"/><rect x="1458" y="187.500" width="7" height="7"/>
        <path class="wcx" d="M1475 187.500l9 9M1484 187.500l-9 9"/>
      </g>

      <circle class="ring" cx="1413" cy="283" r="54"/>
      <rect class="cube" x="1387.500" y="257.500" width="51" height="51"/>
      <rect class="cubein" x="1397" y="267" width="32" height="32"/>
      <text x="1413" y="288.500" class="cubet" textLength="44" lengthAdjust="spacingAndGlyphs">Сверху</text>
      <text x="1413" y="235" class="compass">С</text>
      <text x="1469" y="291" class="compass">В</text>
      <text x="1413" y="348" class="compass">Ю</text>
      <text x="1356" y="291" class="compass">З</text>
      <rect class="wcs" x="1389" y="370" width="47" height="17" rx="4"/>
      <text x="1393" y="382" class="wcst">МСК</text>
      <path class="wcsa" d="M1423 376h9l-4.500 4.500z"/>

      <rect class="navbar" x="1459" y="412" width="34" height="213" rx="4"/>
      <g class="navi">
        <circle cx="1486" cy="418" r="3.500"/>
        <path d="M1466 433h14v5q0 14-14 14h-1q-.5-19 1-19z"/><circle cx="1476" cy="443" r="7"/>
        <path d="M1463 469h28"/><path d="M1475 462l2 2 2-2" />
        <path d="M1470 495l-5-8c-1-2 1-3 2-1l4 5-2-10c0-2 2-2 3 0l2 8V476c0-2 3-2 3 0l1 12 2-9c0-2 3-2 3 0l-2 11 3-5c1-2 3-1 2 1l-4 8q-2 3-8 3-5 0-5-2z"/>
        <path d="M1466 503l14 14M1478 503l-14 14M1466 503v4M1466 503h4M1478 503v4M1478 503h-4M1464 517v-4M1464 517h4"/><circle cx="1479" cy="516" r="5"/><path d="M1483 520l4 4"/>
        <path d="M1470 535l5-5 5 5h-3v15h-4v-15zM1476 552l4-3M1462 553l6-5v3h14v4h-14v3z"/>
        <path d="M1475 570l3 3 3-3"/><path d="M1464 577h6v6h-6zM1473 577h6v6h-6zM1482 577h6v6h-6zM1465 590h17v15h-17z"/><path d="M1470 594l8 4-8 4z"/>
        <circle cx="1486" cy="618" r="3.500"/>
      </g>

      <g class="ucs">
        <path d="M24.500 936V986M25 986H75"/>
        <rect x="20.500" y="981.500" width="9" height="9"/>
      </g>
      <text x="32" y="932" class="ax">Y</text>
      <text x="86" y="985" class="ax">X</text>
      <g class="cross">
        <path d="M1482.500 947V1007M1434 994.500H1496"/>
        <rect x="1480" y="992" width="5" height="5"/>
      </g>
    </svg>
    <span class="vplabel">[−][Сверху][2D-каркас]</span>
  </main>

  <footer class="status">
    <div class="ltabs">
      <span class="lt on">Модель</span><span class="lt">Лист1</span><span class="lt">Лист2</span><span class="lt plus">+</span>
    </div>
    <div class="sgroups">
      <div class="g gm">МОДЕЛЬ</div>
      <div class="g g2w">
        <span class="sb1"><svg viewBox="0 0 20 20" class="st"><path class="sw" d="M2 6h16M2 10h16M2 14h16M6 2v16M10 2v16M14 2v16"/></svg></span>
        <span class="sb1"><svg viewBox="0 0 20 20" class="st"><path class="dots" d="M3 4h2v2H3zM9 4h2v2H9zM15 4h2v2h-2zM3 9h2v2H3zM9 9h2v2H9zM15 9h2v2h-2zM3 14h2v2H3zM9 14h2v2H9zM15 14h2v2h-2z"/></svg></span><i class="car"></i>
      </div>
      <div class="g g3w">
        <span class="sb1"><svg viewBox="0 0 20 20" class="st"><path class="sw" d="M4 1v16h15M8 13v4"/></svg></span>
        <span class="sb1 act"><svg viewBox="0 0 20 20" class="st"><circle class="sw" cx="9" cy="11" r="7"/><path class="sw" d="M9 11l8-8M4 11h14"/></svg></span><i class="car"></i>
        <span class="sb1"><svg viewBox="0 0 20 20" class="st"><path stroke="#5cc47e" d="M8 1v12"/><path stroke="#e0535a" d="M3 4l14 14"/><path class="fb" d="M8 8h3v3H8z"/></svg></span><i class="car"></i>
      </div>
      <div class="g g4w">
        <span class="sb1 act"><svg viewBox="0 0 20 20" class="st"><path class="sw2" d="M3 17 16 4M3 17h15"/><path class="fw" d="M8 9.500h4v4H8z"/></svg></span>
        <span class="sb1 act"><svg viewBox="0 0 20 20" class="st"><path class="sw2" d="M4 6h14v13H4z"/><path class="sw" d="M1 1h5v5H1z"/></svg></span><i class="car"></i>
      </div>
      <div class="g g5w"><span class="sb1 act"><svg viewBox="0 0 20 20" class="st"><path class="fw" d="M1 2h18v3H1zM1 7h10v3H1zM1 12h18v2H1zM1 16h8v2H1z"/><path class="fw" d="M13 8h6v1h-6z"/></svg></span></div>
      <div class="g g6w">
        <span class="sb1 act"><svg viewBox="0 0 20 20" class="st"><path class="fw" d="M8 1l3 8-1 2 4 7-5-3-5 3 4-7-1-2z"/><circle class="sw" cx="15" cy="5" r="3"/></svg></span>
        <span class="sb1"><svg viewBox="0 0 20 20" class="st"><path class="fw" d="M8 3l3 7-1 1 4 7-5-3-5 3 4-7-1-1z" fill-opacity=".8"/><path class="fw" d="M15 2l1 2 2 1-2 1-1 2-1-2-2-1 2-1z"/></svg></span>
        <span class="sb1"><svg viewBox="0 0 20 20" class="st"><path class="fw" d="M10 3l3 7-1 1 4 7-6-3-6 3 4-7-1-1z" fill-opacity=".8"/></svg></span>
        <span class="scale">1:1</span><i class="car"></i>
      </div>
      <div class="g g7w">
        <span class="sb1"><svg viewBox="0 0 20 20" class="st"><path class="fw" d="M8 1h4l.5 3 2.500 1 2.500-2 2.500 3-2 2 .5 2.500 2 .5v3l-3 .5-1 2 2 2.500-3 2.500-2-2-2.500 1-.5 2h-4l-.5-3-2-1-2.500 2L1 16l2-2.500-.5-2L0 11V8l3-.5 1-2.500-2-2L5 1l2 2 1-.5z" transform="scale(.9) translate(1 0)"/><circle fill="#3b4453" cx="10" cy="9" r="3.500"/></svg></span><i class="car"></i>
      </div>
      <div class="g g8w"><span class="sb1"><svg viewBox="0 0 20 20" class="st"><path class="fw" d="M9 1h2v8h8v2h-8v8H9v-8H1V9h8z"/></svg></span></div>
      <div class="g g9w"><span class="sb1"><svg viewBox="0 0 20 20" class="st"><path class="sw" d="M2 2h7v7H2zM8 18l4-6 4 6z"/><circle class="sw" cx="15" cy="7" r="3"/></svg></span></div>
      <div class="g g10w"><span class="sb1"><svg viewBox="0 0 20 20" class="st"><path fill="#4e88c5" d="M4 1h9l5 4v7H4z"/><path class="fy" d="M2 10h8v8H2z"/><path fill="none" stroke="#6fc56f" stroke-width="2.500" d="M9 14l4 4 6-7"/><path class="fw" d="M7 1h2v5h5v2H7z"/></svg></span></div>
      <div class="g g11w">
        <span class="sb1"><svg viewBox="0 0 20 20" class="st"><path class="sw" d="M2 4h16v13H2z"/><path class="fw" d="M5 14l4-4-1-1-3 3V9H4v6h5v-1zM15 6l-4 0v1h2l-3 3 1 1 3-3v2h1z"/></svg></span>
        <span class="sb1"><svg viewBox="0 0 20 20" class="st"><path class="fw" d="M1 3h18v2.500H1zM1 9h18v2.500H1zM1 15h18v2.500H1z"/></svg></span>
      </div>
    </div>
  </footer>
</div>
</body>
</html>
```
FILE: styles.css
```css
* { box-sizing: border-box; }
html, body { margin: 0; padding: 0; }
body { background: #222933; font-family: Roboto, "Noto Sans", "Liberation Sans", sans-serif; font-size: 11.700px; color: #dce1e7; }
i { display: block; }
svg { display: block; overflow: visible; }
.app { position: relative; width: 1500px; height: 1040px; display: flex; flex-direction: column; overflow: hidden; }

.fw { fill: #dcdcdc; }
.fb { fill: #7ec4f5; }
.fy { fill: #f6c96e; }
.sw { fill: none; stroke: #d5d8dc; stroke-width: 1.2; }
.sw2 { fill: none; stroke: #dcdcdc; stroke-width: 1.8; }
.sg { fill: none; stroke: #c6c9cd; stroke-width: 1.2; }
.sb { fill: none; stroke: #7ec4f5; stroke-width: 1.3; }
.sk { fill: none; stroke: #3b4453; stroke-width: 1.3; }
.sy { fill: none; stroke: #f6c96e; stroke-width: 1.3; }
.sy2 { fill: none; stroke: #f6c96e; stroke-width: 2; }
.scy { fill: none; stroke: #7fd4e6; stroke-width: 1.6; }
.sx { fill: none; stroke: #aeb4bd; stroke-width: 2; }
.dots { fill: #dcdcdc; }

.car { width: 0; height: 0; border-left: 3.5px solid transparent; border-right: 3.5px solid transparent; border-top: 4px solid #b5bcc6; flex: none; }
.ml2 { margin-left: 2px; } .ml3 { margin-left: 3px; } .ml4 { margin-left: 4px; } .ml7 { margin-left: 7px; } .ml8 { margin-left: 8px; } .ml66 { margin-left: 63px; }

.appbtn { position: absolute; left: 5px; top: 4px; width: 40px; height: 40px; background: linear-gradient(#d6d6d6, #5d5d5d); border: 1px solid #101010; padding: 0; z-index: 3; }

.titlebar { height: 30px; display: flex; align-items: center; flex: none; padding-bottom: 1px; }
.qat { width: 438px; padding-left: 49px; display: flex; align-items: center; flex: none; }
.q { width: 24.300px; display: flex; justify-content: center; }
.q svg { width: 20px; height: 20px; }
.more { margin-left: 11px; }
.doctitle { width: 482px; display: flex; gap: 13px; color: #eef1f4; white-space: nowrap; flex: none; }
.arrow { height: 0; border-left: 4px solid #c4c9d0; border-top: 4px solid transparent; border-bottom: 4px solid transparent; border-right: 0; margin-left: 3px; width: 0; margin-right: 5px; }
.search { width: 178px; height: 20px; background: #4c5768; color: #aab3bf; font-style: italic; font-size: 11px; line-height: 20px; padding-left: 2px; white-space: nowrap; overflow: hidden; flex: none; }
.c26 { width: 26px; display: flex; justify-content: center; flex: none; }
.c22 { width: 22px; display: flex; justify-content: center; flex: none; }
.svc { width: 92px; padding-left: 2px; display: flex; align-items: center; gap: 6px; white-space: nowrap; flex: none; }
.divider { width: 1px; height: 18px; background: #4c5563; margin-left: 9px; }
.qm { fill: #2668c8; font-size: 15px; font-weight: 700; text-anchor: middle; }

.tabs { height: 19px; padding-left: 49px; display: flex; flex: none; align-items: flex-end; }
.t { height: 18px; line-height: 17px; padding: 0 9.650px; color: #aeb6c0; white-space: nowrap; }
.t.on { background: #3b4453; color: #fff; border-radius: 3px 3px 0 0; }
.tmini { display: flex; align-items: center; padding-left: 22px; }

.ribbon { height: 97px; margin-left: 6px; width: 1484px; display: flex; flex: none; background: #3b4453; }
.panel { display: flex; flex-direction: column; border-right: 1px solid #222933; flex: none; height: 100%; }
.p1 { width: 261px; } .p2 { width: 133px; } .p3 { width: 140px; } .p4 { width: 271px; } .p5 { width: 86px; }
.p6 { width: 243px; } .p7 { width: 75px; } .p8 { width: 106px; } .p9 { width: 100px; } .p10 { width: 69px; border-right: 0; }
.pbody { flex: 1; display: flex; min-height: 0; }
.ptitle { position: relative; height: 18px; padding-bottom: 1px; display: flex; align-items: center; justify-content: center; gap: 5px; color: #d3d8df; white-space: nowrap; }
.pt10 { padding-right: 11px; }
.pt6 { padding-right: 10px; }
.cl { margin-top: 1px; border-left-width: 4.500px; border-right-width: 4.500px; }
.launch { position: absolute; right: 4px; top: 6px; }

.big { display: flex; flex-direction: column; align-items: center; padding-top: 5px; flex: none; }
.bi { width: 36px; height: 36px; flex: none; }
.lb { line-height: 18px; text-align: center; color: #dfe3e8; white-space: nowrap; }
.lbup { margin-top: -1px; }
.l2 { line-height: 15px; margin-top: 2px; }
.cb { margin-top: 3px; }
.cbu { margin-top: 3px; }
.bigA { height: 36px; font-size: 36px; line-height: 38px; color: #cfd2d6; font-family: "Liberation Sans", sans-serif; }
.w19 { width: 19px; } .w20 { width: 20px; } .w22 { width: 22px; } .w24 { width: 24px; } .w30 { width: 30px; }
.w42 { width: 42px; } .w43 { width: 43px; } .w47 { width: 47px; } .w48 { width: 48px; } .w51 { width: 51px; } .w55 { width: 55px; }
.w56 { width: 56px; } .w62 { width: 62px; } .w66 { width: 66px; } .w69 { width: 69px; } .w74 { width: 74px; } .w80 { width: 80px; } .w84 { width: 84px; }

.stack { margin-top: 3px; display: grid; grid-auto-rows: 24.500px; align-self: flex-start; flex: none; }
.stack.c4 { grid-template-columns: 29px 30px 40px 30px; }
.cell { display: flex; align-items: center; }
.ic { display: flex; align-items: center; justify-content: center; flex: none; }
.si { width: 19px; height: 19px; }

.lcol { width: 207px; margin-top: 5px; flex: none; margin-left: -1px; }
.dd { height: 21.500px; background: #4c5768; border: 1px solid #252c37; display: flex; align-items: center; position: relative; color: #e2e6eb; white-space: nowrap; }
.w207 { width: 207px; } .w137 { width: 137px; }
.ddi { margin-left: 2px; flex: none; }
.ddt { margin-left: 4px; color: #d5dce5; }
.l10 { margin-left: 9px; }
.m2 { margin-left: 2px; }
.cdd { position: absolute; right: 4px; top: 7px; border-left-width: 4.500px; border-right-width: 4.500px; border-top-width: 5px; border-top-color: #c9ced6; }
.layers { display: grid; grid-template-columns: 24px 24px 26px 24px 20px; grid-auto-rows: 24px; margin-top: 1px; }
.pstack { margin-top: 5px; display: flex; flex-direction: column; gap: 1.500px; flex: none; }
.prow { display: flex; align-items: center; }
.swatch { width: 16px; height: 16px; background: #000; border: 1px solid #a0a6ae; margin-left: 12px; flex: none; }
.lineprev { width: 64px; height: 1px; background: #fff; margin-left: 3px; flex: none; }

.doctabs { height: 27px; display: flex; flex: none; align-items: flex-end; padding-left: 26px; }
.dt { height: 22px; padding-top: 1px; display: flex; align-items: center; white-space: nowrap; border-radius: 6px 6px 0 0; }
.dt1 { width: 122px; padding-left: 10px; background: #2b323e; color: #aab2bc; }
.dt2 { width: 222px; padding-left: 11px; background: #343c4a; color: #eef1f4; gap: 7px; }
.dtplus { width: 19px; height: 16px; margin-left: 7px; margin-bottom: 2px; background: #3b4453; color: #aeb5bf; border-radius: 5px 5px 0 0; text-align: center; line-height: 15px; font-size: 15px; font-weight: 700; }

.viewport { position: relative; height: 834px; flex: none; background: #d7d9dd; border: 4px solid #3b4453; border-bottom: 0; overflow: hidden; }
.canvas { display: block; }
.vplabel { position: absolute; left: 3px; top: 6px; color: #1a1a1a; font-size: 12.400px; line-height: 16px; white-space: nowrap; }

.ln { fill: none; stroke: #161616; stroke-width: 3.4; }
.l4 { stroke-width: 4.5; }
.gl { fill: none; stroke: #444; stroke-width: 3.4; }
.gy { stroke: #555; }
.wf { fill: #d7d9dd; }
.bk { fill: #000; }
.bl { fill: none; stroke: #3b3bef; stroke-width: 4; }
.blt { fill: none; stroke: #2a2af0; stroke-width: 3.500; }
.blt.wide { stroke-width: 6.500; }
.blc { stroke: #1a1ae0; }
.blb { fill: #1414d8; }
.ht { fill: url(#hatch); stroke: #2a2a2a; stroke-width: 2.500; }

.wc { fill: none; stroke: #5e6064; stroke-width: 1.500; }
.wcx { stroke-width: 2.500; }
.ring { fill: none; stroke: #dfe0e3; stroke-width: 12; }
.cube { fill: #e2e3e6; stroke: #9b9da1; stroke-width: 1; }
.cubein { fill: #cfd0d5; }
.cubet { fill: #85878c; font-size: 16px; text-anchor: middle; }
.compass { fill: #dcdde0; stroke: #aeb0b4; stroke-width: .7; font-size: 21px; text-anchor: middle; }
.wcs { fill: #e0e1e8; }
.wcst { fill: #8a8c92; font-size: 11px; }
.wcsa { fill: none; stroke: #a0a2a8; }
.navbar { fill: rgba(216, 218, 222, .55); stroke: #a6a8ac; stroke-width: 1.500; }
.navi { fill: none; stroke: #b0b2b6; stroke-width: 1.200; opacity: .85; }
.ucs { fill: none; stroke: #111; stroke-width: 1.200; }
.ax { fill: #111; font-size: 19px; text-anchor: middle; font-family: "Liberation Sans", sans-serif; font-weight: 400; }
.cross { fill: none; stroke: #111; stroke-width: 1; }

.status { position: relative; height: 33px; flex: none; background: #222933; border-top: 2px solid #3b4453; border-bottom: 3px solid #3b4453; display: flex; border-left: 4px solid #3b4453; border-right: 4px solid #3b4453; }
.ltabs { width: 896px; display: flex; flex: none; padding-left: 13px; align-items: flex-start; }
.lt { height: 17px; line-height: 15px; color: #aeb6c0; width: 57px; text-align: center; background: #3b4453; border-radius: 0 0 7px 7px; margin-right: -2px; flex: none; }
.lt:nth-child(n+2) { width: 55px; margin-left: 2px; background: #313947; }
.lt.on { width: 68px; color: #fff; font-weight: 700; }
.lt.plus { width: 20px; margin-left: 6px; font-weight: 700; font-size: 15px; }
.sgroups { display: flex; flex: none; align-items: flex-start; padding-top: .500px; }
.g { height: 23px; background: #3b4453; display: flex; align-items: center; flex: none; margin-right: 3px; overflow: hidden; }
.gm { width: 56px; justify-content: center; color: #e9edf1; font-size: 12.500px; }
.g2w { width: 63px; } .g3w { width: 100px; } .g4w { width: 61px; } .g5w { width: 24px; } .g6w { width: 104px; } .g7w { width: 37px; } .g8w { width: 24px; } .g9w { width: 24px; } .g10w { width: 22px; } .g11w { width: 48px; }
.sb1 { width: 23px; height: 23px; display: flex; align-items: center; justify-content: center; flex: none; }
.sb1.act { background: #5b8fc5; }
.g .car { margin: 0 3px 0 5px; }
.st { width: 17px; height: 17px; }
.scale { width: 24px; text-align: center; color: #dfe3e8; }
```
